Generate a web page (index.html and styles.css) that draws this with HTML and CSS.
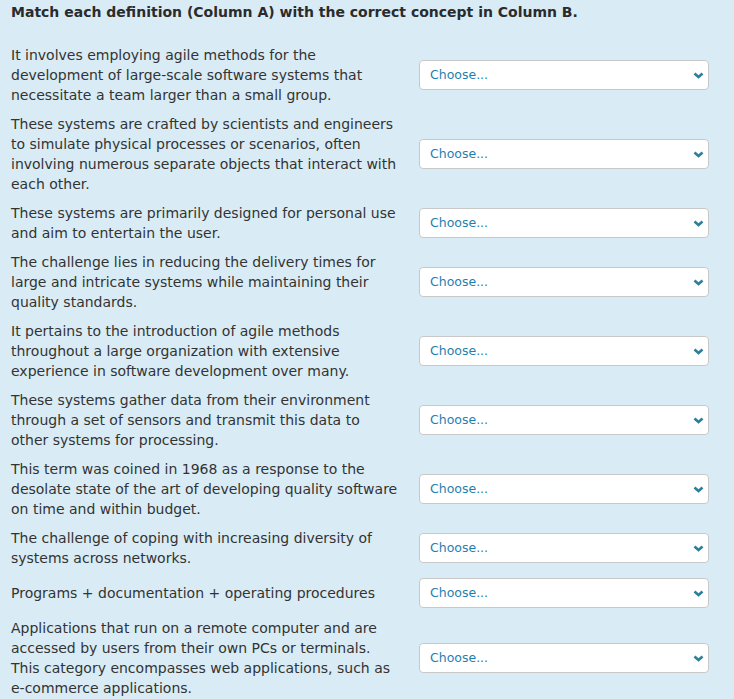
FILE: index.html
```html
<!DOCTYPE html>
<html>
<head>
<meta charset="utf-8">
<link rel="stylesheet" href="styles.css">
</head>
<body>
<div class="page">
  <h1 class="title">Match each definition (Column A) with the correct concept in Column B.</h1>
  <div class="rows">
    <div class="row"><div class="def">It involves employing agile methods for the development of large-scale software systems that necessitate a team larger than a small group.</div><div class="pick"><span>Choose...</span><svg viewBox="0 0 11 7" class="chev"><path d="M1.5 1.5 L5.5 5 L9.5 1.5" /></svg></div></div>
    <div class="row"><div class="def">These systems are crafted by scientists and engineers to simulate physical processes or scenarios, often involving numerous separate objects that interact with each other.</div><div class="pick"><span>Choose...</span><svg viewBox="0 0 11 7" class="chev"><path d="M1.5 1.5 L5.5 5 L9.5 1.5" /></svg></div></div>
    <div class="row"><div class="def">These systems are primarily designed for personal use and aim to entertain the user.</div><div class="pick"><span>Choose...</span><svg viewBox="0 0 11 7" class="chev"><path d="M1.5 1.5 L5.5 5 L9.5 1.5" /></svg></div></div>
    <div class="row"><div class="def">The challenge lies in reducing the delivery times for large and intricate systems while maintaining their quality standards.</div><div class="pick"><span>Choose...</span><svg viewBox="0 0 11 7" class="chev"><path d="M1.5 1.5 L5.5 5 L9.5 1.5" /></svg></div></div>
    <div class="row"><div class="def">It pertains to the introduction of agile methods throughout a large organization with extensive experience in software development over many.</div><div class="pick"><span>Choose...</span><svg viewBox="0 0 11 7" class="chev"><path d="M1.5 1.5 L5.5 5 L9.5 1.5" /></svg></div></div>
    <div class="row"><div class="def">These systems gather data from their environment through a set of sensors and transmit this data to other systems for processing.</div><div class="pick"><span>Choose...</span><svg viewBox="0 0 11 7" class="chev"><path d="M1.5 1.5 L5.5 5 L9.5 1.5" /></svg></div></div>
    <div class="row"><div class="def">This term was coined in 1968 as a response to the desolate state of the art of developing quality software on time and within budget.</div><div class="pick"><span>Choose...</span><svg viewBox="0 0 11 7" class="chev"><path d="M1.5 1.5 L5.5 5 L9.5 1.5" /></svg></div></div>
    <div class="row"><div class="def">The challenge of coping with increasing diversity of systems across networks.</div><div class="pick"><span>Choose...</span><svg viewBox="0 0 11 7" class="chev"><path d="M1.5 1.5 L5.5 5 L9.5 1.5" /></svg></div></div>
    <div class="row"><div class="def">Programs + documentation + operating procedures</div><div class="pick"><span>Choose...</span><svg viewBox="0 0 11 7" class="chev"><path d="M1.5 1.5 L5.5 5 L9.5 1.5" /></svg></div></div>
    <div class="row"><div class="def">Applications that run on a remote computer and are accessed by users from their own PCs or terminals. This category encompasses web applications, such as e-commerce applications.</div><div class="pick"><span>Choose...</span><svg viewBox="0 0 11 7" class="chev"><path d="M1.5 1.5 L5.5 5 L9.5 1.5" /></svg></div></div>
  </div>
</div>
</body>
</html>
```
FILE: styles.css
```css
html, body {
  margin: 0;
  padding: 0;
  background: #d9ecf6;
}
.page {
  padding: 2px 11px 0 11px;
  font-family: "DejaVu Sans", Verdana, sans-serif;
  font-size: 14px;
  line-height: 20px;
  color: #333333;
}
.title {
  margin: 0 0 23px 0;
  font-size: 14px;
  font-weight: bold;
  line-height: 20px;
  color: #2b2b2b;
}
.rows {
  display: flex;
  flex-direction: column;
  gap: 9px;
}
.row {
  display: flex;
  align-items: center;
  gap: 20px;
}
.def {
  width: 388px;
  flex: none;
}
.pick {
  height: 28px;
  width: 274px;
  flex: none;
  margin: 1px 0;
  background: #ffffff;
  border: 1px solid #c8c8c8;
  border-radius: 4px;
  display: flex;
  align-items: center;
  justify-content: space-between;
  padding: 0 4px 0 10px;
  box-sizing: content-box;
  color: #1f7fb0;
  font-size: 12.5px;
}
.chev {
  width: 11px;
  height: 7px;
}
.chev path {
  fill: none;
  stroke: #2a7f9b;
  stroke-width: 2.6;
}
```
